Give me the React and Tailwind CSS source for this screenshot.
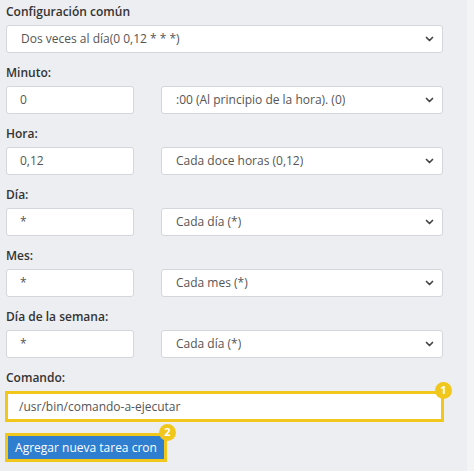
import React from 'react';

const Chevron = () => (
    <svg width="9" height="6" viewBox="0 0 9 6" className="shrink-0">
        <path d="M1.5 1.5 L4.5 4.5 L7.5 1.5" fill="none" stroke="#444" strokeWidth="1.7" strokeLinecap="round" strokeLinejoin="round" />
    </svg>
);

const Select = ({ text, className = '' }) => (
    <div className={`flex h-[28px] items-center justify-between rounded-[3px] border border-[#d3d6da] bg-white pl-[14px] pr-[8px] text-[12px] text-[#555] ${className}`}>
        <span className="truncate">{text}</span>
        <Chevron />
    </div>
);

const Field = ({ value }) => (
    <div className="flex h-[28px] w-[128px] items-center rounded-[3px] border border-[#d3d6da] bg-white pl-[13px] text-[12px] text-[#555]">
        {value}
    </div>
);

const Label = ({ children }) => (
    <div className="mb-[3px] h-[20px] text-[12px] font-semibold leading-[20px] text-[#333]">{children}</div>
);

const Badge = ({ n, className = '' }) => (
    <div className={`absolute flex h-[17px] w-[17px] items-center justify-center rounded-full bg-[#f2c71c] text-[11px] font-bold text-white ${className}`}>
        {n}
    </div>
);

const rows = [
    { label: 'Minuto:', value: '0', option: ':00 (Al principio de la hora). (0)' },
    { label: 'Hora:', value: '0,12', option: 'Cada doce horas (0,12)' },
    { label: 'Día:', value: '*', option: 'Cada día (*)' },
    { label: 'Mes:', value: '*', option: 'Cada mes (*)' },
    { label: 'Día de la semana:', value: '*', option: 'Cada día (*)' },
];

export default function App() {
    return (
        <div className="flex h-[471px] w-[474px] bg-[#eceef1]" style={{ fontFamily: '"Open Sans", "Liberation Sans", sans-serif' }}>
            <div className="ml-[6px] w-[437px] pt-[2px]">
                <Label>Configuración común</Label>
                <Select text="Dos veces al día(0 0,12 * * *)" />

                {rows.map((r) => (
                    <div key={r.label} className="mt-[10px]">
                        <Label>{r.label}</Label>
                        <div className="flex gap-[27px]">
                            <Field value={r.value} />
                            <Select text={r.option} className="flex-1" />
                        </div>
                    </div>
                ))}

                <div className="mt-[10px]">
                    <Label>Comando:</Label>
                    <div className="relative -ml-[1px] w-[439px]">
                        <div className="flex h-[31px] items-center border-[3px] border-[#f2c71c] bg-white pl-[11px] text-[12px] text-[#555]">
                            /usr/bin/comando-a-ejecutar
                        </div>
                        <Badge n="1" className="-right-[8px] -top-[9px]" />
                    </div>
                </div>

                <div className="relative -ml-[1px] mt-[11px] w-[162px]">
                    <div className="flex h-[29px] items-center justify-center whitespace-nowrap border-[3px] border-[#f2c71c] bg-[#2f7ed0] text-[12px] text-white">
                        Agregar nueva tarea cron
                    </div>
                    <Badge n="2" className="-right-[9px] -top-[9px]" />
                </div>
            </div>
            <div className="flex-1" />
            <div className="w-[7px] bg-[#f3f4f6]" />
        </div>
    );
}
